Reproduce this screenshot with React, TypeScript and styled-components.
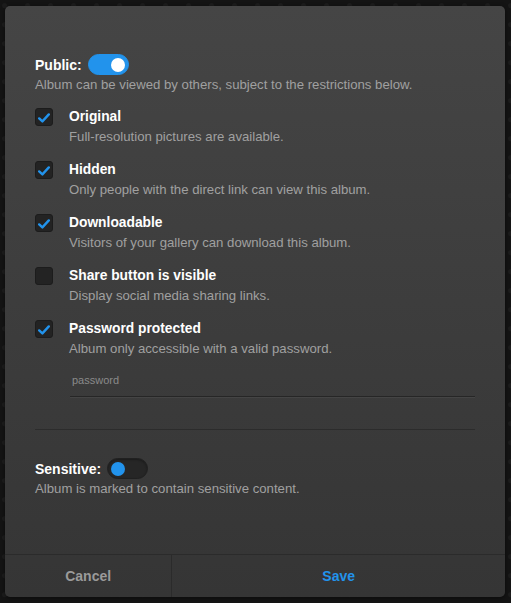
import React from "react";
import styled, { createGlobalStyle } from "styled-components";

const Global = createGlobalStyle`
  html, body { margin: 0; padding: 0; }
  body {
    background: #141414;
    background-image:
      radial-gradient(circle at 20% 30%, rgba(255,255,255,0.04) 0 2px, transparent 3px),
      radial-gradient(circle at 70% 80%, rgba(255,255,255,0.03) 0 2px, transparent 3px);
    background-size: 23px 19px, 31px 27px;
    font-family: "Liberation Sans", Arial, sans-serif;
    width: 511px;
    height: 603px;
    overflow: hidden;
  }
`;

const Stage = styled.div`
  padding: 6px 6px 0 5px;
`;

const Dialog = styled.div`
  width: 500px;
  height: 591px;
  border-radius: 5px;
  background: linear-gradient(to bottom, #454545 0%, #353535 100%);
  box-shadow: 0 1px 4px rgba(0, 0, 0, 0.5);
  display: flex;
  flex-direction: column;
  overflow: hidden;
`;

const Content = styled.div`
  flex: 1;
  padding: 48px 30px 0 30px;
  display: flex;
  flex-direction: column;
`;

const SwitchRow = styled.div`
  display: flex;
  align-items: center;
  height: 21px;
  gap: 6px;
`;

const SwitchLabel = styled.span`
  color: #fff;
  font-weight: bold;
  font-size: 14px;
`;

const Track = styled.span<{ $on: boolean }>`
  position: relative;
  width: 41px;
  height: 21px;
  border-radius: 11px;
  box-sizing: border-box;
  background: ${(p) => (p.$on ? "#2293ec" : "#262626")};
  border: 1px solid ${(p) => (p.$on ? "#2293ec" : "#202020")};
  box-shadow: ${(p) => (p.$on ? "none" : "inset 0 1px 2px rgba(0,0,0,0.3)")};
`;

const Knob = styled.span<{ $on: boolean }>`
  position: absolute;
  top: 2.5px;
  ${(p) => (p.$on ? "right: 3px;" : "left: 3px;")}
  width: 14px;
  height: 14px;
  border-radius: 50%;
  background: ${(p) => (p.$on ? "#fff" : "#2293ec")};
`;

const Desc = styled.div`
  color: #a0a0a0;
  font-size: 13.2px;
  line-height: 16px;
`;

const SwitchDesc = styled(Desc)`
  margin-top: 2px;
`;

const Options = styled.div`
  margin-top: 15px;
  display: flex;
  flex-direction: column;
  gap: 16px;
`;

const Option = styled.div`
  display: flex;
  align-items: flex-start;
  gap: 16px;
`;

const Box = styled.span`
  flex: none;
  width: 18px;
  height: 18px;
  box-sizing: border-box;
  border-radius: 3px;
  background: #232323;
  border: 1px solid #1c1c1c;
  display: flex;
  align-items: center;
  justify-content: center;
  padding: 2px 1px 0 0;
`;

const OptionText = styled.div`
  flex: 1;
  display: flex;
  flex-direction: column;
`;

const Title = styled.div`
  color: #fff;
  font-weight: bold;
  font-size: 13.8px;
  line-height: 18px;
`;

const OptionDesc = styled(Desc)`
  margin-top: 3px;
`;

const Input = styled.input`
  margin-top: 10px;
  margin-left: 1px;
  height: 30px;
  box-sizing: border-box;
  background: transparent;
  border: none;
  border-bottom: 1px solid #262626;
  box-shadow: 0 1px 0 rgba(255,255,255,0.05);
  color: #fff;
  font-family: "Liberation Sans", Arial, sans-serif;
  font-size: 11px;
  padding: 0 2px 4px 2px;
  outline: none;
  &::placeholder { color: #8a8a8a; }
`;

const Divider = styled.hr`
  margin: 32px 0 0 0;
  border: none;
  border-top: 1px solid #2c2c2c;
  height: 0;
`;

const Sensitive = styled.div`
  margin-top: 28px;
  display: flex;
  flex-direction: column;
`;

const Footer = styled.div`
  height: 43px;
  box-sizing: border-box;
  border-top: 1px solid #2b2b2b;
  display: flex;
`;

const Button = styled.button<{ $primary?: boolean }>`
  flex: ${(p) => (p.$primary ? 2 : 1)};
  background: transparent;
  border: none;
  border-right: ${(p) => (p.$primary ? "none" : "1px solid #2b2b2b")};
  color: ${(p) => (p.$primary ? "#2293ec" : "#9a9a9a")};
  font-family: "Liberation Sans", Arial, sans-serif;
  font-weight: bold;
  font-size: 14px;
  padding: 0;
  cursor: pointer;
`;

const Check = () => (
  <svg width="12" height="10" viewBox="0 0 12 10">
    <path d="M1.2 5.4 L4.4 8.4 L10.8 1.4" fill="none" stroke="#2293ec" strokeWidth="2.4" strokeLinecap="round" strokeLinejoin="round" />
  </svg>
);

const Switch = ({ label, on }: { label: string; on: boolean }) => (
  <SwitchRow>
    <SwitchLabel>{label}</SwitchLabel>
    <Track $on={on}>
      <Knob $on={on} />
    </Track>
  </SwitchRow>
);

const opts = [
  { t: "Original", d: "Full-resolution pictures are available.", c: true },
  { t: "Hidden", d: "Only people with the direct link can view this album.", c: true },
  { t: "Downloadable", d: "Visitors of your gallery can download this album.", c: true },
  { t: "Share button is visible", d: "Display social media sharing links.", c: false },
  { t: "Password protected", d: "Album only accessible with a valid password.", c: true },
];

export default function App() {
  return (
    <>
      <Global />
      <Stage>
        <Dialog>
          <Content>
            <Switch label="Public:" on />
            <SwitchDesc>Album can be viewed by others, subject to the restrictions below.</SwitchDesc>
            <Options>
              {opts.map((o, i) => (
                <Option key={o.t}>
                  <Box>{o.c && <Check />}</Box>
                  <OptionText>
                    <Title>{o.t}</Title>
                    <OptionDesc>{o.d}</OptionDesc>
                    {i === opts.length - 1 && <Input placeholder="password" />}
                  </OptionText>
                </Option>
              ))}
            </Options>
            <Divider />
            <Sensitive>
              <Switch label="Sensitive:" on={false} />
              <SwitchDesc>Album is marked to contain sensitive content.</SwitchDesc>
            </Sensitive>
          </Content>
          <Footer>
            <Button>Cancel</Button>
            <Button $primary>Save</Button>
          </Footer>
        </Dialog>
      </Stage>
    </>
  );
}
